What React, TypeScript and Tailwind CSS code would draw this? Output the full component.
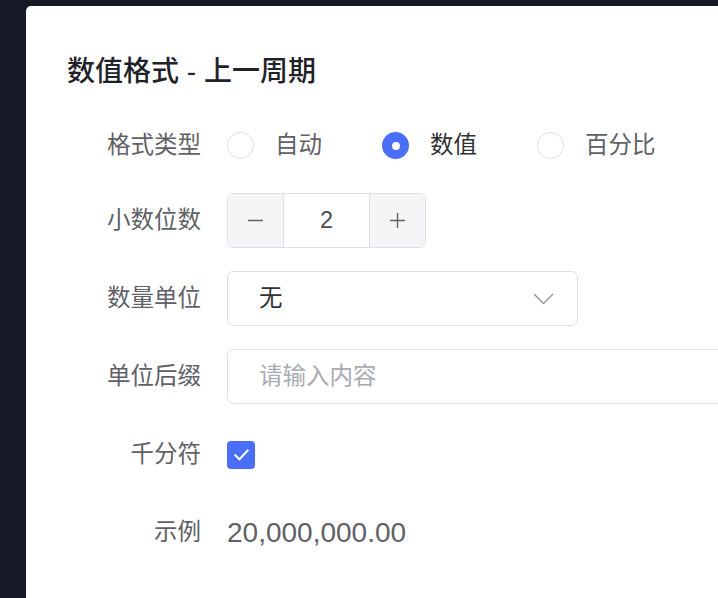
const labelCls = "w-[134px] shrink-0 text-right text-[23.5px] text-[#5f6167]";

const Radio = ({ label, checked }: { label: string; checked?: boolean }) => (
  <div className="mr-[60px] flex items-center gap-[21px]">
    {checked ? (
      <span className="flex h-[27px] w-[27px] items-center justify-center rounded-full bg-[#4a6ef5]">
        <span className="h-[8px] w-[8px] rounded-full bg-white" />
      </span>
    ) : (
      <span className="h-[27px] w-[27px] rounded-full border-[1.5px] border-[#dcdfe6] bg-white" />
    )}
    <span className={checked ? "text-[23.5px] text-[#303133]" : "text-[23.5px] text-[#5f6167]"}>{label}</span>
  </div>
);

export default function App() {
  return (
    <div
      className="flex h-[598px] w-[718px] overflow-hidden bg-[#161a26] pl-[26px] pt-[6px]"
      style={{ fontFamily: '"Liberation Sans", "Noto Sans CJK SC", sans-serif' }}
    >
      <div className="flex-1 rounded-tl-[5px] bg-white pl-[41px] pt-[48px]">
        <h1 className="text-[28px] font-medium leading-[36px] text-[#1f2329]">数值格式 - 上一周期</h1>

        <div className="mt-[31px] flex flex-col gap-[23px]">
          <div className="flex h-[49px] items-center gap-[26px]">
            <span className={labelCls}>格式类型</span>
            <div className="flex items-center">
              <Radio label="自动" />
              <Radio label="数值" checked />
              <Radio label="百分比" />
            </div>
          </div>

          <div className="flex h-[55px] items-center gap-[26px]">
            <span className={labelCls}>小数位数</span>
            <div className="flex h-[55px] w-[199px] overflow-hidden rounded-[6px] border-[1.5px] border-[#dcdfe6]">
              <button className="flex w-[56px] items-center justify-center border-r-[1.5px] border-[#dcdfe6] bg-[#f4f5f7]">
                <svg width="17" height="17" viewBox="0 0 16 16" fill="none" stroke="#606266" strokeWidth="1.3">
                  <path d="M1 8h14" />
                </svg>
              </button>
              <div className="flex flex-1 items-center justify-center text-[23.5px] text-[#4a4c52]">2</div>
              <button className="flex w-[56px] items-center justify-center border-l-[1.5px] border-[#dcdfe6] bg-[#f4f5f7]">
                <svg width="17" height="17" viewBox="0 0 16 16" fill="none" stroke="#606266" strokeWidth="1.3">
                  <path d="M1 8h14M8 1v14" />
                </svg>
              </button>
            </div>
          </div>

          <div className="flex h-[55px] items-center gap-[26px]">
            <span className={labelCls}>数量单位</span>
            <div className="flex h-[55px] w-[351px] items-center justify-between rounded-[6px] border-[1.5px] border-[#dcdfe6] pl-[31px] pr-[23px]">
              <span className="text-[23.5px] text-[#303133]">无</span>
              <svg width="21" height="12" viewBox="0 0 21 12" fill="none" stroke="#909399" strokeWidth="1.4">
                <path d="M1 1l9.5 9.5L20 1" />
              </svg>
            </div>
          </div>

          <div className="flex h-[55px] items-center gap-[26px]">
            <span className={labelCls}>单位后缀</span>
            <div className="flex h-[55px] w-[520px] shrink-0 items-center rounded-[6px] border-[1.5px] border-[#dcdfe6] pl-[31px]">
              <span className="text-[23.5px] text-[#a8abb2]">请输入内容</span>
            </div>
          </div>

          <div className="flex h-[55px] items-center gap-[26px]">
            <span className={labelCls}>千分符</span>
            <span className="flex h-[28px] w-[28px] items-center justify-center rounded-[4px] bg-[#4a6ef5]">
              <svg width="17" height="13" viewBox="0 0 16 12" fill="none" stroke="white" strokeWidth="1.8">
                <path d="M1.5 6l4.5 4.5L14.5 1.5" />
              </svg>
            </span>
          </div>

          <div className="flex h-[55px] items-center gap-[26px]">
            <span className={labelCls}>示例</span>
            <span className="text-[28px] text-[#5f6167]">20,000,000.00</span>
          </div>
        </div>
      </div>
    </div>
  );
}
